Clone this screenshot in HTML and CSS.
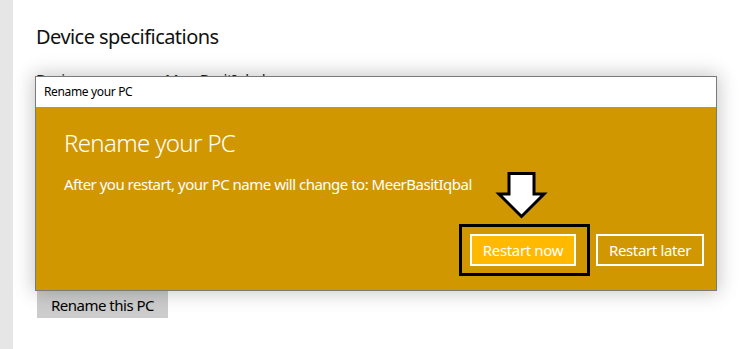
FILE: index.html
```html
<!DOCTYPE html>
<html lang="en">
<head>
<meta charset="utf-8">
<title>Rename your PC</title>
<link rel="stylesheet" href="styles.css">
</head>
<body>
<div class="page">
  <aside class="sidebar"></aside>
  <main class="content">
    <h2 class="section-title">Device specifications</h2>
    <div class="spec-row">
      <span class="spec-label">Device name</span>
      <span class="spec-value">MeerBasitIqbal</span>
    </div>
    <button class="rename-btn">Rename this PC</button>
  </main>

  <div class="dialog">
    <div class="dialog-titlebar">Rename your PC</div>
    <div class="dialog-body">
      <h1 class="dialog-heading">Rename your PC</h1>
      <p class="dialog-text">After you restart, your PC name will change to: MeerBasitIqbal</p>
      <div class="dialog-actions">
        <button class="btn btn-primary">Restart now</button>
        <button class="btn btn-secondary">Restart later</button>
      </div>
    </div>
  </div>

  <div class="highlight"></div>
  <svg class="arrow" width="56" height="52" viewBox="0 0 56 52">
    <polygon points="15,4.5 40,4.5 40,25 50,25 27.5,47.5 5,25 15,25" fill="#fff" stroke="#000" stroke-width="3" stroke-linejoin="miter"/>
  </svg>
</div>
</body>
</html>
```
FILE: styles.css
```css
* { box-sizing: border-box; }
html, body { margin: 0; padding: 0; }
body {
  width: 756px;
  height: 349px;
  overflow: hidden;
  background: #fff;
  font-family: "Noto Sans", "Open Sans", sans-serif;
  color: #000;
}
.page {
  position: relative;
  display: flex;
  width: 756px;
  height: 349px;
}
.sidebar {
  width: 13px;
  flex: none;
  background: #e6e6e6;
}
.content {
  flex: 1;
  display: flex;
  flex-direction: column;
  align-items: flex-start;
  padding: 23px 0 0 23px;
}
.section-title {
  margin: 0;
  font-size: 20px;
  font-weight: 400;
  line-height: 28px;
  letter-spacing: -0.55px;
  color: #111;
}
.spec-row {
  display: flex;
  margin-top: 18px;
  font-size: 15px;
  line-height: 20px;
  letter-spacing: -0.5px;
  color: #222;
}
.spec-label { width: 129px; }
.rename-btn {
  margin: 197px 0 0 1px;
  width: 131px;
  height: 32px;
  padding: 6px 0 0 14px;
  text-align: left;
  border: none;
  background: #cccccc;
  font-family: inherit;
  font-size: 15px;
  line-height: 20px;
  letter-spacing: -0.5px;
  color: #000;
  align-self: flex-start;
}

.dialog {
  position: absolute;
  left: 35px;
  top: 76px;
  width: 682px;
  height: 215px;
  border: 1px solid #7a7a7a;
  background: #d19700;
  box-shadow: 0 0 18px 2px rgba(0,0,0,0.22);
  display: flex;
  flex-direction: column;
}
.dialog-titlebar {
  height: 30px;
  line-height: 30px;
  padding-left: 8px;
  background: #fff;
  font-size: 12px;
  letter-spacing: -0.35px;
  color: #000;
  flex: none;
}
.dialog-body {
  flex: 1;
  display: flex;
  flex-direction: column;
  padding: 20px 12px 24px 28px;
  color: #fff;
}
.dialog-heading {
  margin: 0;
  font-size: 24px;
  font-weight: 300;
  line-height: 32px;
  letter-spacing: -0.65px;
}
.dialog-text {
  margin: 15px 0 0;
  font-size: 15px;
  line-height: 20px;
  letter-spacing: -0.5px;
}
.dialog-actions {
  margin-top: auto;
  display: flex;
  justify-content: flex-end;
  gap: 20px;
}
.btn {
  height: 32px;
  border: 2px solid #fff;
  padding: 0;
  font-family: inherit;
  font-size: 15px;
  line-height: 28px;
  letter-spacing: -0.35px;
  color: #fff;
  text-align: center;
}
.btn-primary { width: 106px; background: #ffb900; }
.btn-secondary { width: 108px; background: transparent; }

.highlight {
  position: absolute;
  left: 459px;
  top: 224px;
  width: 131px;
  height: 52px;
  border: 3px solid #000;
}
.arrow {
  position: absolute;
  left: 494px;
  top: 169px;
}
```
